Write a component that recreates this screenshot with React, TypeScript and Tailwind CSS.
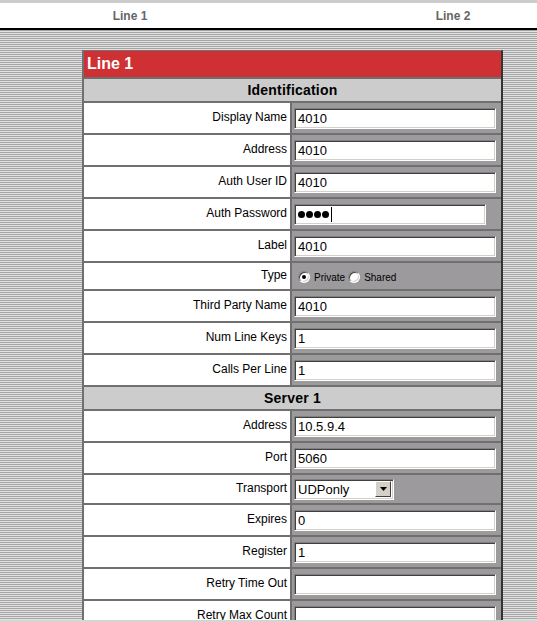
import React from "react";

const font = { fontFamily: '"Liberation Sans", Arial, Helvetica, sans-serif' };

type Row =
  | { kind: "header"; title: string }
  | { kind: "text"; label: string; value: string }
  | { kind: "password"; label: string }
  | { kind: "radio"; label: string }
  | { kind: "select"; label: string; value: string };

const rows: Row[] = [
  { kind: "header", title: "Identification" },
  { kind: "text", label: "Display Name", value: "4010" },
  { kind: "text", label: "Address", value: "4010" },
  { kind: "text", label: "Auth User ID", value: "4010" },
  { kind: "password", label: "Auth Password" },
  { kind: "text", label: "Label", value: "4010" },
  { kind: "radio", label: "Type" },
  { kind: "text", label: "Third Party Name", value: "4010" },
  { kind: "text", label: "Num Line Keys", value: "1" },
  { kind: "text", label: "Calls Per Line", value: "1" },
  { kind: "header", title: "Server 1" },
  { kind: "text", label: "Address", value: "10.5.9.4" },
  { kind: "text", label: "Port", value: "5060" },
  { kind: "select", label: "Transport", value: "UDPonly" },
  { kind: "text", label: "Expires", value: "0" },
  { kind: "text", label: "Register", value: "1" },
  { kind: "text", label: "Retry Time Out", value: "" },
  { kind: "text", label: "Retry Max Count", value: "" },
];

const inset =
  "border border-t-[#808080] border-l-[#808080] border-b-white border-r-white shadow-[inset_1px_1px_0_#404040,inset_-1px_-1px_0_#d4d0c8] bg-white";

function TextBox({ value, w = "w-[202px]" }: { value: string; w?: string }) {
  return (
    <div className={`${inset} ${w} h-[21px] flex items-center pl-[3px] text-[13px] text-black leading-none`}>
      {value}
    </div>
  );
}

function Radio({ checked }: { checked: boolean }) {
  return (
    <span className="relative inline-block w-[12px] h-[12px] rounded-full bg-white border border-t-[#808080] border-l-[#808080] border-b-white border-r-white shadow-[inset_1px_1px_0_#404040,inset_-1px_-1px_0_#d4d0c8]">
      {checked && (
        <span className="absolute left-[3px] top-[3px] w-[4px] h-[4px] rounded-full bg-black" />
      )}
    </span>
  );
}

function Dot() {
  return <span className="inline-block w-[7px] h-[7px] rounded-full bg-black mr-[1px]" />;
}

function Field({ row }: { row: Row }) {
  if (row.kind === "header") return null;
  let h = "h-[30px]";
  let content: React.ReactNode = null;
  if (row.kind === "text") content = <TextBox value={row.value} />;
  if (row.kind === "password")
    content = (
      <div className={`${inset} w-[192px] h-[21px] flex items-center pl-[3px] text-black`}>
        <Dot />
        <Dot />
        <Dot />
        <Dot />
        <span className="ml-[1px] w-px h-[15px] bg-black" />
      </div>
    );
  if (row.kind === "radio") {
    h = "h-[26px]";
    content = (
      <div className="flex items-center text-[10px] text-black pl-[4px] pt-[2px]">
        <Radio checked />
        <span className="ml-[4px] mr-[3px]">Private</span>
        <Radio checked={false} />
        <span className="ml-[4px]">Shared</span>
      </div>
    );
  }
  if (row.kind === "select") {
    h = "h-[28px]";
    content = (
      <div className={`${inset} w-[100px] h-[21px] flex items-center justify-between pl-[3px] pr-[2px] text-[13px] text-black`}>
        <span className="leading-none">{row.value}</span>
        <span className="w-[16px] h-[16px] bg-[#d4d0c8] border border-t-white border-l-white border-b-[#404040] border-r-[#404040] flex items-center justify-center">
          <svg width="7" height="4" viewBox="0 0 7 4">
            <path d="M0 0H7L3.5 4Z" fill="#000" />
          </svg>
        </span>
      </div>
    );
  }
  return (
    <div className={`flex ${h} gap-[2px]`}>
      <div className="w-[206px] bg-white flex items-center justify-end pr-[3px] pb-[2px] text-[12px] text-black">
        {row.label}
      </div>
      <div className="flex-1 bg-[#9c9a9c] flex items-center pl-[2px]">{content}</div>
    </div>
  );
}

export default function App() {
  return (
    <div style={font} className="w-[537px] h-[622px] flex flex-col overflow-hidden bg-white">
      <div className="h-[3px] bg-[#cccccc]" />
      <div className="h-[25px] flex items-center text-[12px] font-bold text-[#666666]">
        <div className="w-[260px] text-center">Line 1</div>
        <div className="ml-[110px] w-[166px] text-center">Line 2</div>
      </div>
      <div className="h-[2px] bg-black" />
      <div className="flex-1 overflow-hidden bg-[repeating-linear-gradient(to_bottom,#a5a5a5_0px,#a5a5a5_1px,#e2e2e2_1px,#e2e2e2_2px)] pt-[20px] pl-[82px]">
        <div className="w-[421px] border-l-2 border-l-[#707070] border-r-2 border-r-[#333333] border-t border-t-[#707070] bg-[#707070] flex flex-col gap-[2px]">
          <div className="h-[26px] bg-[#cf3034] flex items-center pl-[3px] text-white font-bold text-[16px]">
            Line 1
          </div>
          {rows.map((r, i) =>
            r.kind === "header" ? (
              <div
                key={i}
                className="h-[22px] bg-[#cccccc] flex items-center justify-center font-bold text-[14px] text-black tracking-[0.2px]"
              >
                {r.title}
              </div>
            ) : (
              <Field key={i} row={r} />
            )
          )}
        </div>
      </div>
      <div className="h-[2px] bg-[#d4d4d4]" />
    </div>
  );
}
